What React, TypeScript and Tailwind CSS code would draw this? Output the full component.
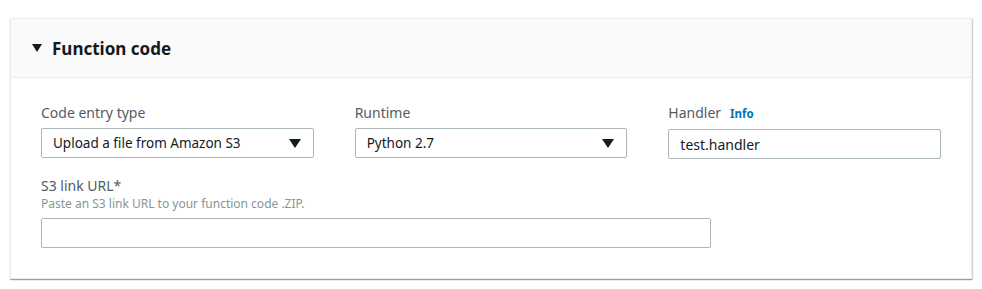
export default function App() {
  const font = { fontFamily: '"Noto Sans", "Open Sans", sans-serif' };
  return (
    <div className="w-[982px] h-[289px] bg-white pt-[18px] pl-[10px]" style={font}>
      <div className="w-[962px] border border-[#eaeded] bg-white shadow-[0_1px_1px_0_rgba(0,28,36,0.3),1px_1px_1px_0_rgba(0,28,36,0.15)]">
        <div className="h-[59px] bg-[#fafafa] border-b border-[#eaeded] flex items-center pl-[21px]">
          <svg width="10" height="8" viewBox="0 0 10 8" className="mr-[10px]">
            <path d="M0 0 L10 0 L5 8 Z" fill="#16191f" />
          </svg>
          <h2 className="text-[17px] font-bold text-[#16191f] leading-none">Function code</h2>
        </div>
        <div className="px-[30px] pt-[25px] pb-[30px]">
          <div className="grid grid-cols-3 gap-x-[41px]">
            <Field label="Code entry type">
              <Select value="Upload a file from Amazon S3" />
            </Field>
            <Field label="Runtime">
              <Select value="Python 2.7" />
            </Field>
            <Field
              label="Handler"
              extra={<span className="ml-[9px] text-[11.5px] font-bold text-[#0073bb]">Info</span>}
            >
              <div className="h-[30px] border border-[#aab7b8] rounded-[2px] flex items-center px-[11px] text-[14px] text-[#16191f]">
                test.handler
              </div>
            </Field>
          </div>
          <div className="mt-[17px] w-[670px]">
            <div className="text-[14px] text-[#545b64] leading-[20px]">S3 link URL*</div>
            <div className="text-[12px] text-[#879596] leading-[16px]">
              Paste an S3 link URL to your function code .ZIP.
            </div>
            <div className="mt-[6px] h-[30px] border border-[#aab7b8] rounded-[2px]" />
          </div>
        </div>
      </div>
    </div>
  );
}

function Field({
  label,
  extra,
  children,
}: {
  label: string;
  extra?: React.ReactNode;
  children: React.ReactNode;
}) {
  return (
    <div>
      <div className="flex items-baseline mb-[5px] leading-[20px]">
        <span className="text-[14px] text-[#545b64]">{label}</span>
        {extra}
      </div>
      {children}
    </div>
  );
}

function Select({ value }: { value: string }) {
  return (
    <div className="h-[30px] border border-[#aab7b8] rounded-[2px] flex items-center justify-between pl-[11px] pr-[12px] text-[13.5px] text-[#16191f]">
      <span>{value}</span>
      <svg width="12" height="9" viewBox="0 0 12 9">
        <path d="M0 0 L12 0 L6 9 Z" fill="#16191f" />
      </svg>
    </div>
  );
}
